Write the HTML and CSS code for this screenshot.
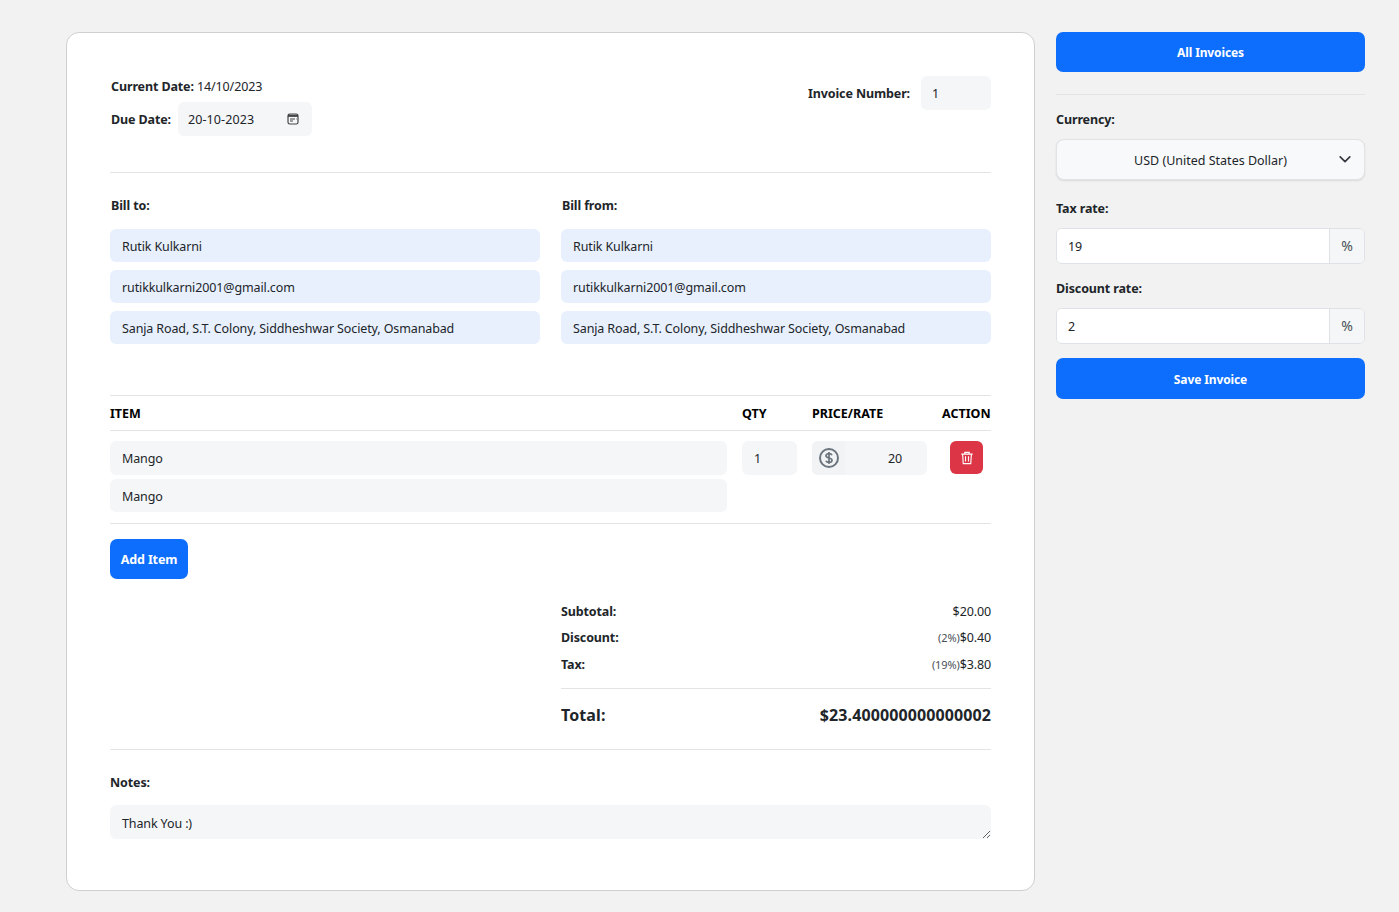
FILE: index.html
```html
<!DOCTYPE html>
<html lang="en">
<head>
    <meta charset="UTF-8">
    <meta name="viewport" content="width=device-width, initial-scale=1.0">
    <title>Invoice</title>
    <link rel="stylesheet" href="styles.css">
</head>
<body>
    <main class="page">
        <form class="invoice-card">
            <div class="invoice-head">
                <div class="dates">
                    <div class="date-line"><b>Current Date:</b> 14/10/2023</div>
                    <div class="due-line">
                        <b>Due Date:</b>
                        <div class="date-field">
                            <input class="field" type="text" value="20-10-2023">
                            <svg class="date-icon" viewBox="0 0 12 12" width="12" height="12" fill="none" stroke="#444" stroke-width="1.200">
                                <rect x="1" y="1" width="10" height="10" rx="1.800"/>
                                <path d="M1 2.800h10" stroke-width="2.200"/>
                                <path d="M3 6h5M3 8h3M9 6h.6" stroke-width="1"/>
                            </svg>
                        </div>
                    </div>
                </div>
                <div class="number-line">
                    <b>Invoice Number:</b>
                    <input class="field number-input" type="text" value="1">
                </div>
            </div>
            <hr class="rule head-rule">

            <div class="bill-grid">
                <div class="bill-col">
                    <label>Bill to:</label>
                    <input class="field filled" type="text" value="Rutik Kulkarni">
                    <input class="field filled" type="text" value="rutikkulkarni2001@gmail.com">
                    <input class="field filled" type="text" value="Sanja Road, S.T. Colony, Siddheshwar Society, Osmanabad">
                </div>
                <div class="bill-col">
                    <label>Bill from:</label>
                    <input class="field filled" type="text" value="Rutik Kulkarni">
                    <input class="field filled" type="text" value="rutikkulkarni2001@gmail.com">
                    <input class="field filled" type="text" value="Sanja Road, S.T. Colony, Siddheshwar Society, Osmanabad">
                </div>
            </div>

            <div class="items">
                <div class="items-head">
                    <span>ITEM</span>
                    <span>QTY</span>
                    <span>PRICE/RATE</span>
                    <span>ACTION</span>
                </div>
                <div class="items-row">
                    <div class="item-names">
                        <input class="field" type="text" value="Mango">
                        <input class="field" type="text" value="Mango">
                    </div>
                    <input class="field qty" type="text" value="1">
                    <div class="price-group">
                        <span class="price-icon">
                            <svg viewBox="0 0 20 20" width="20" height="20" fill="none" stroke="#6c757d">
                                <circle cx="10" cy="10" r="9" stroke-width="2"/>
                                <path d="M13 7.2c-.4-1-1.500-1.600-3-1.600-1.700 0-3 .8-3 2.200 0 3 6 1.400 6 4.400 0 1.400-1.300 2.200-3 2.200-1.500 0-2.700-.7-3-1.700M10 4v12" stroke-width="1.700"/>
                            </svg>
                        </span>
                        <input class="price-input" type="text" value="20">
                    </div>
                    <button class="delete-btn" type="button" aria-label="Delete">
                        <svg viewBox="0 0 16 16" width="14" height="14" fill="none" stroke="#fff" stroke-width="1.300">
                            <path d="M1.500 3.500h13M5.500 3.500V1.500h5v2M3 3.500l.7 11h8.600l.7-11M6.300 6v6M9.700 6v6"/>
                        </svg>
                    </button>
                </div>
            </div>

            <button class="btn add-btn" type="button">Add Item</button>

            <div class="totals">
                <div class="total-line"><b>Subtotal:</b><span>$20.00</span></div>
                <div class="total-line"><b>Discount:</b><span><small>(2%)</small>$0.40</span></div>
                <div class="total-line"><b>Tax:</b><span><small>(19%)</small>$3.80</span></div>
                <hr class="rule totals-rule">
                <div class="grand-line"><span>Total:</span><span>$23.400000000000002</span></div>
            </div>
            <hr class="rule notes-rule">

            <label class="notes-label">Notes:</label>
            <textarea class="field notes" rows="1">Thank You :)</textarea>
        </form>

        <aside class="sidebar">
            <button class="btn wide-btn" type="button">All Invoices</button>
            <hr class="rule side-rule">
            <label class="side-label">Currency:</label>
            <div class="select-wrap">
                <select class="currency">
                    <option>USD (United States Dollar)</option>
                </select>
                <svg class="chevron" viewBox="0 0 16 16" width="14" height="14" fill="none" stroke="#343a40" stroke-width="1.900" stroke-linecap="round" stroke-linejoin="round">
                    <path d="M2.500 5.500 8 11l5.500-5.500"/>
                </svg>
            </div>
            <label class="side-label tax-label">Tax rate:</label>
            <div class="rate-group">
                <input type="text" value="19">
                <span>%</span>
            </div>
            <label class="side-label discount-label">Discount rate:</label>
            <div class="rate-group">
                <input type="text" value="2">
                <span>%</span>
            </div>
            <button class="btn wide-btn save-btn" type="button">Save Invoice</button>
        </aside>
    </main>
</body>
</html>
```

FILE: styles.css
```css
* { margin: 0; padding: 0; box-sizing: border-box; }
body {
    font-family: 'Noto Sans', 'Open Sans', sans-serif;
    font-size: 12.500px;
    letter-spacing: -0.12px;
    color: #212529;
    background-color: #f2f2f2;
}
b, label { font-weight: 700; }
input, textarea, select, button {
    font-family: inherit;
    font-size: inherit;
    letter-spacing: inherit;
    color: #212529;
}

.page {
    display: flex;
    align-items: flex-start;
    gap: 21px;
    padding: 32px 34px 0 66px;
    min-height: 912px;
}
.invoice-card {
    width: 969px;
    height: 859px;
    padding: 43px 43px 0;
    background-color: #fff;
    border: 1px solid #cfcfcf;
    border-radius: 13px;
}
.rule {
    border: none;
    border-top: 1px solid #e3e4e6;
}
.field {
    display: block;
    width: 100%;
    height: 33px;
    padding: 0 12px;
    border: none;
    outline: none;
    border-radius: 6px;
    background-color: #f5f6f8;
}
.filled {
    padding-top: 2px;
    background-color: #e8f0fe;
}

.invoice-head {
    display: flex;
    justify-content: space-between;
    height: 60px;
}
.dates { padding-left: 1px; }
.date-line { height: 26px; line-height: 22px; }
.due-line {
    display: flex;
    align-items: center;
    gap: 7px;
}
.date-field { position: relative; width: 134px; }
.date-field .field {
    height: 34px;
    padding-left: 10px;
    letter-spacing: 0.1px;
}
.date-icon { position: absolute; top: 11px; right: 13px; }
.number-line {
    display: flex;
    align-items: flex-start;
    gap: 11px;
    line-height: 36px;
}
.number-input { width: 70px; height: 34px; padding-left: 11px; }
.head-rule { margin-top: 36px; }

.bill-grid {
    display: grid;
    grid-template-columns: 430px 430px;
    gap: 21px;
    margin-top: 22px;
}
.bill-col {
    display: flex;
    flex-direction: column;
    gap: 8px;
}
.bill-col label { margin-bottom: 4px; padding-left: 1px; line-height: 22px; }

.items { margin-top: 51px; }
.items-head, .items-row {
    display: grid;
    grid-template-columns: 617px 55px 115px 49px;
    column-gap: 15px;
}
.items-head {
    height: 36px;
    align-items: center;
    font-weight: 700;
    letter-spacing: 0;
    color: #000;
    border-top: 1px solid #e3e4e6;
    border-bottom: 1px solid #e3e4e6;
}
.items-row {
    height: 93px;
    padding-top: 10px;
    border-bottom: 1px solid #e3e4e6;
    align-items: start;
}
.item-names {
    display: flex;
    flex-direction: column;
    gap: 4px;
}
.item-names .field:first-child, .qty { height: 34px; }
.item-names .field:last-child { padding-top: 2px; }
.price-group {
    display: flex;
    height: 34px;
    border-radius: 6px;
    overflow: hidden;
    background-color: #f5f6f8;
}
.price-icon {
    display: flex;
    align-items: center;
    justify-content: center;
    width: 33px;
    background-color: #f1f3f5;
}
.price-input {
    flex: 1;
    min-width: 0;
    padding-right: 25px;
    border: none;
    outline: none;
    text-align: right;
    background: none;
}
.delete-btn {
    display: flex;
    align-items: center;
    justify-content: center;
    justify-self: center;
    width: 33px;
    height: 33px;
    border: none;
    border-radius: 6px;
    background-color: #dc3545;
}

.btn {
    border: none;
    color: #fff;
    font-weight: 700;
    background-color: #0d6efd;
}
.add-btn {
    display: block;
    width: 78px;
    height: 40px;
    margin-top: 15px;
    border-radius: 7px;
}
.totals {
    width: 430px;
    margin: 19.500px 0 0 451px;
}
.total-line {
    display: flex;
    justify-content: space-between;
    align-items: baseline;
    height: 26.500px;
    line-height: 26px;
}
.total-line small { font-size: 11px; color: #495057; }
.totals-rule { margin-top: 9.500px; }
.grand-line {
    display: flex;
    justify-content: space-between;
    height: 60px;
    line-height: 52px;
    font-size: 16px;
    font-weight: 700;
    letter-spacing: 0.1px;
}
.notes-label { display: block; margin-top: 22px; line-height: 22px; }
.notes {
    height: 34px;
    margin-top: 11px;
    padding-top: 9px;
    line-height: 20px;
    resize: vertical;
}

.sidebar {
    display: flex;
    flex-direction: column;
    width: 309px;
}
.wide-btn {
    width: 100%;
    height: 40px;
    font-size: 12px;
    border-radius: 7px;
}
.side-rule { margin-top: 22px; }
.side-label { line-height: 22px; }
.sidebar .side-label:nth-of-type(1) { margin-top: 14px; margin-bottom: 8px; }
.tax-label { margin-top: 18px; margin-bottom: 8px; }
.discount-label { margin-top: 14px; margin-bottom: 8px; }
.select-wrap { position: relative; }
.currency {
    display: block;
    width: 100%;
    height: 41px;
    padding-top: 2px;
    border: 1px solid #e1e3e6;
    border-radius: 8px;
    outline: none;
    letter-spacing: 0;
    text-align: center;
    appearance: none;
    background-color: #f8f9fa;
    box-shadow: 0 1px 2px rgba(0, 0, 0, 0.1);
}
.chevron { position: absolute; top: 13px; right: 13px; }
.rate-group {
    display: flex;
    height: 36px;
    border: 1px solid #dee2e6;
    border-radius: 6px;
    overflow: hidden;
    background-color: #fff;
}
.rate-group input {
    flex: 1;
    min-width: 0;
    padding: 0 11px;
    border: none;
    outline: none;
}
.rate-group span {
    width: 35px;
    font-size: 14px;
    line-height: 34px;
    text-align: center;
    color: #495057;
    border-left: 1px solid #dee2e6;
    background-color: #f5f6f8;
}
.save-btn { height: 41px; margin-top: 14px; padding-top: 2px; }
```
